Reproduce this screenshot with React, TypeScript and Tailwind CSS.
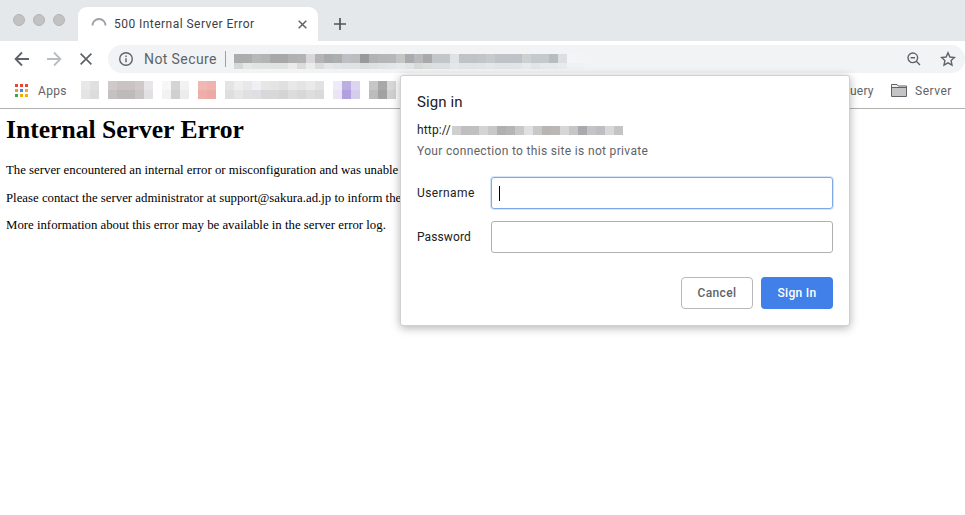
import React from "react";

const urlTop = ["#acacac","#adadad","#b7b9b9","#b3b5b5","#a8a8a8","#a8a8a8","#b1b1b1","#b3b3b3","#d8d8d8","#b5b3b5","#a9abab","#adafaf","#bdbfc2","#bbbdbf","#979a9a","#b2b2b4","#b6b6b8","#b6b7b8","#c4c6c6","#a9acae","#b9b9bb","#a9a9ab","#c2c6c9","#c2c6c9","#e0e3e6","#bfc3c6","#bfc3c6","#c1c5c8","#c6cacc","#bfc2c6","#bfc2c6","#bfc2c6","#ccd0d0","#c4cacc","#c4c9cb","#b7bcbd","#dcdfe1","#f4f5f6","#f3f4f5"];
const urlBot = ["#d6d7d7","#e6e7e7","#e2e3e3","#e2e3e3","#e1e2e2","#e1e2e2","#ebebeb","#dcdcdc","#ebecec","#dcdcdc","#e6e7e8","#e3e4e5","#e0e2e3","#e0e2e3","#dcdede","#dfe0e1","#e2e3e4","#e4e5e6","#e7e8e9","#e2e3e4","#d8dada","#dcdddd","#dde0e1","#dde0e1","#e4e7e8","#e1e4e5","#e1e4e5","#e2e4e5","#e4e6e7","#e1e3e5","#e1e3e5","#e2e4e6","#e7e9ea","#e1e5e6","#e6e8e9","#e6e8e9","#e8eaeb","#f0f1f2","#f0f1f2"];
const siteRow = ["#cfcfcf","#bfbfbf","#c0c0c0","#d4d4d4","#c8c8c8","#b0b0b0","#b5b5b5","#c8c8c8","#e0e0e4","#c8c8c8","#b9b5b5","#bbb7b7","#d6d6d6","#c6c6c6","#a9a9af","#c6c2c6","#bebec0","#d8d8d8","#c4c4c4"];
const appsDots = ["#ea4335","#ea4335","#ea4335","#ed9c2e","#4285f4","#f4a52c","#34a853","#f9ab00","#f9ab00"];

function Mosaic({ rows, cell = 9, heights }: { rows: string[][]; cell?: number; heights: number[] }) {
  return (
    <div className="flex flex-col shrink-0">
      {rows.map((r, i) => (
        <div key={i} className="flex">
          {r.map((c, j) => (
            <div key={j} style={{ background: c, width: cell, height: heights[i] }} />
          ))}
        </div>
      ))}
    </div>
  );
}

export default function App() {
  return (
    <div className="relative w-[965px] h-[515px] overflow-hidden bg-white font-['Roboto',sans-serif]">
      {/* Tab strip */}
      <div className="h-[41px] bg-[#e5e8eb] flex">
        <div className="w-[78px] flex items-center gap-[8px] pl-[13px] pb-[1px]">
          <span className="w-3 h-3 rounded-full bg-[#c2c2c2] border border-[#b4b4b4]" />
          <span className="w-3 h-3 rounded-full bg-[#c2c2c2] border border-[#b4b4b4]" />
          <span className="w-3 h-3 rounded-full bg-[#c2c2c2] border border-[#b4b4b4]" />
        </div>
        <div className="mt-[7px] w-[240px] h-[34px] bg-white rounded-t-[9px] flex items-center pl-[13px] pr-[10px]">
          <svg width="16" height="16" viewBox="0 0 16 16" fill="none" stroke="#9aa0a6" strokeWidth="1.8" className="shrink-0 -mt-[1px]">
            <path d="M1.5 9.5A6.5 6.5 0 0 1 14.5 9.5" />
          </svg>
          <span className="ml-[7px] text-[12px] text-[#3c4043] tracking-[0.46px] whitespace-nowrap flex-1">500 Internal Server Error</span>
          <svg width="9" height="9" viewBox="0 0 9 9" stroke="#5f6368" strokeWidth="1.5" className="mr-[1px]">
            <path d="M.7.7l7.6 7.6M8.3.7.7 8.3" />
          </svg>
        </div>
        <svg width="12" height="12" viewBox="0 0 12 12" stroke="#505458" strokeWidth="1.7" className="ml-[16px] mt-[18px]">
          <path d="M6 0v12M0 6h12" />
        </svg>
      </div>

      {/* Toolbar */}
      <div className="h-[40px] flex items-center pl-[14px] pb-[4px]">
        <svg width="16" height="16" viewBox="0 0 16 16" fill="none" stroke="#5f6368" strokeWidth="1.8">
          <path d="M15 8H2M8 1.5 1.6 8 8 14.5" />
        </svg>
        <svg width="16" height="16" viewBox="0 0 16 16" fill="none" stroke="#b9bcc0" strokeWidth="1.8" className="ml-[16px]">
          <path d="M1 8h13M8 1.5 14.4 8 8 14.5" />
        </svg>
        <svg width="12" height="12" viewBox="0 0 12 12" stroke="#5f6368" strokeWidth="1.7" className="ml-[18px]">
          <path d="M.6.6l10.8 10.8M11.4.6.6 11.4" />
        </svg>
        <div className="ml-[16px] w-[857px] h-[28px] rounded-full bg-[#f1f3f4] flex items-center">
          <svg width="16" height="16" viewBox="0 0 16 16" fill="none" stroke="#5f6368" strokeWidth="1.4" className="ml-[10px] shrink-0">
            <circle cx="8" cy="8" r="6.3" />
            <path d="M8 7.2v4M8 4.4v1.5" />
          </svg>
          <span className="ml-[10px] text-[14px] text-[#5f6368] tracking-[0.4px] whitespace-nowrap">Not Secure</span>
          <span className="ml-[8px] w-px h-4 bg-[#9aa0a6]" />
          <div className="ml-[8px] mt-[5px]">
            <Mosaic rows={[urlTop, urlBot]} heights={[9, 6]} />
          </div>
          <svg width="16" height="16" viewBox="0 0 16 16" fill="none" stroke="#5f6368" strokeWidth="1.4" className="ml-auto shrink-0">
            <circle cx="6.8" cy="6.8" r="4.8" />
            <path d="M4.6 6.8h4.4M10.3 10.3 14 14" />
          </svg>
          <svg width="16" height="16" viewBox="0 0 16 16" fill="none" stroke="#5f6368" strokeWidth="1.4" className="ml-[18px] mr-[9px] shrink-0">
            <path d="M8 1.8l1.9 4.2 4.6.5-3.4 3.1.9 4.6L8 11.9l-4 2.3.9-4.6-3.4-3.1 4.6-.5z" />
          </svg>
        </div>
      </div>

      {/* Bookmarks */}
      <div className="h-[28px] border-b border-[#b0b0b0] flex items-start pl-[15px] relative">
        <div className="grid grid-cols-3 gap-[2px] w-[13px] mt-[3px] shrink-0">
          {appsDots.map((c, i) => (
            <span key={i} className="w-[3px] h-[3px]" style={{ background: c }} />
          ))}
        </div>
        <span className="ml-[10px] text-[12px] text-[#5f6368] mt-[1px] tracking-[0.35px]">Apps</span>
        <div className="ml-[14px] flex">
          <Mosaic rows={[["#e8e8e8","#dfe0e0"],["#e4e4e4","#dcdcdc"]]} heights={[9, 9]} />
          <div className="ml-[9px]"><Mosaic rows={[["#cfc9ca","#c9c3c4","#c9c3c4","#cfc9ca","#e8e6e8"],["#c6c0c1","#bfbaba","#bfbaba","#c9c5c6","#e2e0e3"]]} heights={[9, 9]} /></div>
          <div className="ml-[9px]"><Mosaic rows={[["#f7f7f7","#d4d4d4","#f2f2f2"],["#f2f2f2","#d0d0d0","#ececec"]]} heights={[9, 9]} /></div>
          <div className="ml-[9px]"><Mosaic rows={[["#f0b8b4","#eeb3af"],["#eeafab","#ecaaa6"]]} heights={[9, 9]} /></div>
          <div className="ml-[9px]"><Mosaic rows={[["#e4e4e4","#eeeeee","#e8e8e8","#f0f0f2","#e6e6e6","#e4e4e4","#e0e0e0","#e8e8e8","#e4e4e4","#eaeaea","#e2e2e2"],["#dedede","#e6e6e6","#e0e0e0","#dedee4","#d8d8d8","#d8d8d8","#d4d4d4","#dcdcdc","#d8d8d8","#dedede","#dadada"]]} heights={[9, 9]} /></div>
          <div className="ml-[9px]"><Mosaic rows={[["#eeeaf8","#bcaee2","#dcd4f0"],["#e9e4f6","#b2a0de","#d6ccee"]]} heights={[9, 9]} /></div>
          <div className="ml-[9px]"><Mosaic rows={[["#c6c6c6","#a8a8a8","#d8d8d8"],["#bcbcbc","#a2a2a2","#d0d0d0"]]} heights={[9, 9]} /></div>
        </div>
        <span className="absolute left-[850px] top-[1px] text-[12px] text-[#5f6368] tracking-[0.2px]">uery</span>
        <svg width="16" height="13" viewBox="0 0 16 13" className="absolute left-[891px] top-[3px]">
          <path d="M.5.5h5.5l1.2 1.5h8.3v10.5H.5z" fill="#f1f1f1" stroke="#5f6368" strokeWidth="1" />
          <path d="M1 4h14v8H1z" fill="#c4c4c4" />
          <path d="M.5 3.5h15" stroke="#5f6368" strokeWidth="1" />
        </svg>
        <span className="absolute left-[915px] top-[1px] text-[12px] text-[#5f6368] tracking-[0.5px]">Server</span>
      </div>

      {/* Page */}
      <div className="px-[6px] font-['Liberation_Serif',serif] text-black whitespace-nowrap">
        <h1 className="mt-[7px] text-[25.6px] leading-[28px] font-bold">Internal Server Error</h1>
        <p className="mt-[19px] text-[12.8px] leading-[14px]">The server encountered an internal error or misconfiguration and was unable to complete your request.</p>
        <p className="mt-[13.5px] text-[12.8px] leading-[14px]">Please contact the server administrator at support@sakura.ad.jp to inform them of the time this error occurred.</p>
        <p className="mt-[13.5px] text-[12.8px] leading-[14px]">More information about this error may be available in the server error log.</p>
      </div>

      {/* Dialog */}
      <div className="absolute left-[400px] top-[75px] w-[450px] h-[251px] bg-white rounded-[3px] border border-[#d0d0d0] shadow-[0_2px_10px_rgba(0,0,0,0.3)] px-[16px] pt-[17px]">
        <div className="text-[15px] leading-[18px] text-[#202124] tracking-[0.1px]">Sign in</div>
        <div className="mt-[12px] flex items-center h-[14px]">
          <span className="text-[12px] text-[#202124] tracking-[0.15px]">http://</span>
          <div className="ml-[1px]">
            <Mosaic rows={[siteRow]} heights={[9]} />
          </div>
        </div>
        <div className="mt-[7px] text-[12px] leading-[14px] text-[#5f6368] tracking-[0.33px] whitespace-nowrap">Your connection to this site is not private</div>
        <div className="mt-[19px] flex items-center h-[32px]">
          <label className="w-[74px] text-[12px] text-[#202124] tracking-[0.4px] whitespace-nowrap">Username</label>
          <div className="w-[342px] h-[32px] rounded-[3px] border border-[#7ea8e6] shadow-[0_0_0_1px_rgba(126,168,230,0.3)] flex items-center pl-[7px]">
            <span className="w-px h-[15px] bg-black" />
          </div>
        </div>
        <div className="mt-[12px] flex items-center h-[32px]">
          <label className="w-[74px] text-[12px] text-[#202124] tracking-[0.1px]">Password</label>
          <div className="w-[342px] h-[32px] rounded-[3px] border border-[#b0b0b0]" />
        </div>
        <div className="mt-[24px] flex justify-end gap-[8px]">
          <button className="w-[72px] h-[32px] rounded-[4px] border border-[#b8b8b8] bg-white text-[12px] font-medium text-[#5f6368] tracking-[0.4px]">Cancel</button>
          <button className="w-[72px] h-[32px] rounded-[4px] bg-[#4080e8] text-[12px] font-medium text-white tracking-[0.3px]">Sign In</button>
        </div>
      </div>
    </div>
  );
}
